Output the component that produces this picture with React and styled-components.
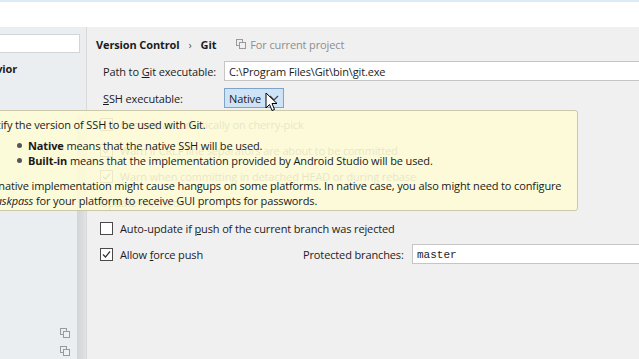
import React from "react";
import styled, { createGlobalStyle } from "styled-components";

const Global = createGlobalStyle`
  html, body { margin: 0; padding: 0; overflow: hidden; background: #f0f0f0; }
  body { font-family: "Open Sans", "Noto Sans", sans-serif; font-size: 11px; letter-spacing: -0.13px; color: #1c1c1c; }
  #root { width: 639px; height: 359px; }
`;

const Frame = styled.div`
  position: relative;
  width: 639px;
  height: 359px;
  display: flex;
  flex-direction: column;
  overflow: hidden;
  background: #f0f0f0;
`;

const TopBar = styled.div`
  height: 25px;
  background: #ffffff;
  border-top: 2px solid #dcebf6;
  flex: none;
`;

const Main = styled.div`
  flex: 1;
  display: flex;
  min-height: 0;
`;

const Sidebar = styled.div`
  width: 86px;
  flex: none;
  background: #ebeef1;
  display: flex;
  overflow: hidden;
`;

const SideBody = styled.div`
  flex: 1;
  min-width: 0;
  display: flex;
  flex-direction: column;
  padding-top: 7px;
`;

const ScrollTrack = styled.div`
  width: 9px;
  flex: none;
  margin-top: 88px;
  background: linear-gradient(to right, #d2d4d6, #dcdddf 70%, #e3e4e5);
`;

const Search = styled.div`
  height: 19px;
  width: 84px;
  margin-left: -4px;
  background: #fff;
  border: 1px solid #d3d6d9;
  box-sizing: border-box;
  flex: none;
`;

const TreeList = styled.div`
  margin-left: -31px;
  margin-top: 7px;
  flex: 1;
  display: flex;
  flex-direction: column;
`;

const TreeItem = styled.div`
  font-weight: 700;
  white-space: nowrap;
  line-height: 18px;
`;

const SideIcons = styled.div`
  display: flex;
  flex-direction: column;
  align-items: flex-end;
  gap: 8px;
  padding: 0 7px 3px 0;
  margin-top: auto;
`;

const Divider = styled.div`
  width: 1px;
  flex: none;
  background: #d9d9d9;
`;

const Content = styled.div`
  flex: 1;
  min-width: 0;
  overflow: hidden;
  padding: 7px 0 0 9px;
  display: flex;
  flex-direction: column;
`;

const Crumbs = styled.div`
  height: 20px;
  display: flex;
  align-items: center;
  gap: 9px;
  white-space: nowrap;
`;

const Crumb = styled.span`
  font-weight: 700;
`;

const Sep = styled.span`
  color: #555;
`;

const Scope = styled.span`
  display: flex;
  align-items: center;
  gap: 4px;
  color: #8e8e8e;
  margin-left: 11px;
`;

const FieldRow = styled.div`
  height: 20px;
  margin-top: 7px;
  display: flex;
  align-items: center;
  padding-left: 7px;
`;

const Label = styled.span`
  width: ${(p) => p.$w || 121}px;
  flex: none;
  white-space: nowrap;
`;

const TextInput = styled.div`
  flex: 1;
  height: 20px;
  box-sizing: border-box;
  background: #fff;
  border: 1px solid #c5c5c5;
  margin-right: -4px;
  display: flex;
  align-items: center;
  padding-left: 4px;
  white-space: nowrap;
  font-family: ${(p) => (p.$mono ? '"Liberation Mono", monospace' : "inherit")};
  letter-spacing: ${(p) => (p.$mono ? "0" : "inherit")};
  padding-top: ${(p) => (p.$mono ? "1px" : "0")};
`;

const Combo = styled.div`
  width: 60px;
  height: 20px;
  box-sizing: border-box;
  background: #cfe3f6;
  border: 1px solid #7fa4c8;
  display: flex;
  align-items: center;
  justify-content: space-between;
  padding: 0 4px 0 4px;
`;

const CheckRow = styled.div`
  height: 26px;
  display: flex;
  align-items: center;
  padding-left: 4px;
  white-space: nowrap;
`;

const CheckGroup = styled.div`
  display: flex;
  align-items: center;
  gap: 7px;
  width: ${(p) => (p.$w ? `${p.$w}px` : "auto")};
  flex: none;
`;

const Box = styled.span`
  width: 13px;
  height: 13px;
  box-sizing: border-box;
  border: 1px solid #4a4a4a;
  background: #fff;
  display: inline-flex;
  align-items: center;
  justify-content: center;
  flex: none;
`;

const U = styled.span`
  text-decoration: underline;
  text-underline-offset: 1px;
`;

const Tooltip = styled.div`
  position: absolute;
  left: -31px;
  top: 110px;
  width: 609px;
  height: 101px;
  box-sizing: border-box;
  background: rgba(253, 251, 214, 0.9);
  border: 1px solid #cbc9a9;
  border-radius: 3px;
  padding: 6px 8px 0 7px;
  line-height: 15px;
  white-space: nowrap;
  color: #1a1a1a;
`;

const TipList = styled.ul`
  margin: 6px 0 10px 0;
  padding: 0 0 0 40px;
  list-style: none;
`;

const TipItem = styled.li`
  display: flex;
  align-items: center;
  &::before {
    content: "";
    width: 5px;
    height: 5px;
    border-radius: 50%;
    background: #555;
    margin-right: 6px;
  }
`;

const Cursor = styled.svg`
  position: absolute;
  left: 265px;
  top: 92px;
`;

const Check = () => (
  <svg width="9" height="9" viewBox="0 0 9 9">
    <path d="M1 4.5 L3.5 7 L8 1.5" fill="none" stroke="#333" strokeWidth="1.2" />
  </svg>
);

const CheckBox = ({ checked }) => <Box>{checked ? <Check /> : null}</Box>;

const CopyIcon = () => (
  <svg width="10" height="10" viewBox="0 0 10 10">
    <rect x="0.5" y="0.5" width="6" height="6" fill="none" stroke="#9a9a9a" />
    <rect x="3.5" y="3.5" width="6" height="6" fill="#f0f0f0" stroke="#9a9a9a" />
  </svg>
);

export default function App() {
  return (
    <>
      <Global />
      <Frame>
        <TopBar />
        <Main>
          <Sidebar>
            <SideBody>
              <Search />
              <TreeList>
                <TreeItem>Behavior</TreeItem>
              </TreeList>
              <SideIcons>
                <CopyIcon />
                <CopyIcon />
              </SideIcons>
            </SideBody>
            <ScrollTrack />
          </Sidebar>
          <Divider />
          <Content>
            <Crumbs>
              <Crumb>Version Control</Crumb>
              <Sep>›</Sep>
              <Crumb>Git</Crumb>
              <Scope>
                <CopyIcon />
                For current project
              </Scope>
            </Crumbs>
            <FieldRow>
              <Label>
                Path to <U>G</U>it executable:
              </Label>
              <TextInput>C:\Program Files\Git\bin\git.exe</TextInput>
            </FieldRow>
            <FieldRow>
              <Label>
                <U>S</U>SH executable:
              </Label>
              <Combo>
                Native
                <svg width="10" height="6" viewBox="0 0 10 6">
                  <path d="M1 1 L5 5 L9 1" fill="none" stroke="#444" strokeWidth="1.2" />
                </svg>
              </Combo>
            </FieldRow>
            <div style={{ height: 3 }} />
            <CheckRow>
              <CheckGroup>
                <CheckBox />
                Commit automatically on cherry-pick
              </CheckGroup>
            </CheckRow>
            <CheckRow>
              <CheckGroup>
                <CheckBox checked />
                Warn if CRLF line separators are about to be committed
              </CheckGroup>
            </CheckRow>
            <CheckRow>
              <CheckGroup>
                <CheckBox checked />
                Warn when committing in detached HEAD or during rebase
              </CheckGroup>
            </CheckRow>
            <CheckRow>
              <Label $w={120}>Update method:</Label>
            </CheckRow>
            <CheckRow>
              <CheckGroup>
                <CheckBox />
                <span>
                  Auto-update if <U>p</U>ush of the current branch was rejected
                </span>
              </CheckGroup>
            </CheckRow>
            <CheckRow>
              <CheckGroup $w={203}>
                <CheckBox checked />
                <span>
                  Allow <U>f</U>orce push
                </span>
              </CheckGroup>
              <Label $w={109}>Protected branches:</Label>
              <TextInput $mono>master</TextInput>
            </CheckRow>
          </Content>
        </Main>
        <Tooltip>
          <div>Specify the version of SSH to be used with Git.</div>
          <TipList>
            <TipItem>
              <b>Native</b>&nbsp;means that the native SSH will be used.
            </TipItem>
            <TipItem>
              <b>Built-in</b>&nbsp;means that the implementation provided by Android Studio will be used.
            </TipItem>
          </TipList>
          <div>
            The native implementation might cause hangups on some platforms. In native case, you also might need to configure
          </div>
          <div>
            <i>ssh-askpass</i> for your platform to receive GUI prompts for passwords.
          </div>
        </Tooltip>
        <Cursor width="13" height="20" viewBox="0 0 13 20">
          <path d="M1 1 L1 16 L4.5 12.5 L7 18.5 L9.5 17.5 L7 11.5 L12 11.5 Z" fill="#fff" stroke="#000" strokeWidth="1" />
        </Cursor>
      </Frame>
    </>
  );
}
